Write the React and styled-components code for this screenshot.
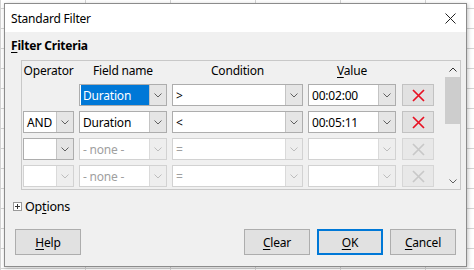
import React from 'react';
import styled, { createGlobalStyle } from 'styled-components';

const GlobalStyle = createGlobalStyle`
  html, body {
    margin: 0;
    padding: 0;
  }
  body {
    width: 474px;
    height: 270px;
    overflow: hidden;
    font-family: "Noto Sans", "Open Sans", sans-serif;
    font-size: 12px;
    color: #000;
    background-color: #fff;
    background-image:
      linear-gradient(to bottom, #d4d4d4 1px, transparent 1px),
      linear-gradient(to right, #d4d4d4 1px, transparent 1px);
    background-size: 100% 20px, 85px 100%;
    background-position: 0 8px, 0 0;
  }
`;

const Desktop = styled.div`
  padding: 3px 0 0 4px;
`;

const Dialog = styled.div`
  width: 463px;
  height: 264px;
  box-sizing: border-box;
  border: 1px solid #8c8c8c;
  background: #f0f0f0;
  box-shadow: 1px 1px 4px rgba(0, 0, 0, 0.25);
  display: flex;
  flex-direction: column;
`;

const TitleBar = styled.div`
  height: 28px;
  background: #fff;
  display: flex;
  align-items: center;
  justify-content: space-between;
  padding: 1px 10px 0 6px;
  box-sizing: border-box;
  flex-shrink: 0;
`;

const TitleText = styled.span`
  font-size: 12px;
  letter-spacing: -0.2px;
`;

const Body = styled.div`
  flex: 1;
  padding: 6px 0 0 6px;
  display: flex;
  flex-direction: column;
`;

const SectionLabel = styled.div`
  font-weight: bold;
  height: 16px;
  line-height: 16px;
  letter-spacing: -0.2px;
`;

const U = styled.span`
  text-decoration: underline;
  text-underline-offset: 2px;
`;

const Frame = styled.div`
  margin: 6px 0 0 10px;
  width: 440px;
  height: 130px;
  box-sizing: border-box;
  border: 1px solid #c8c8c8;
  display: flex;
`;

const Rows = styled.div`
  flex: 1;
  padding: 1px 0 0 1px;
  display: grid;
  grid-template-columns: 51px 88px 131px 88px 33px;
  grid-template-rows: 17px;
  grid-auto-rows: 22px;
  column-gap: 5px;
  row-gap: 5px;
  align-content: start;
  & > :nth-child(5n) {
    margin-left: 1px;
  }
`;

const Header = styled.div`
  line-height: 17px;
  text-align: center;
  letter-spacing: -0.2px;
`;

const Combo = styled.div`
  display: flex;
  box-sizing: border-box;
  border: 1px solid ${p => (p.$disabled ? '#d2d2d2' : '#adadad')};
  background: #fff;
`;

const ComboText = styled.div`
  flex: 1;
  display: flex;
  align-items: center;
  padding-left: 1px;
  min-width: 0;
  color: ${p => (p.$disabled ? '#a0a0a0' : '#000')};
  & > span {
    display: flex;
    align-items: center;
    height: 100%;
    padding-left: 2px;
    box-sizing: border-box;
    width: ${p => (p.$selected ? '100%' : 'auto')};
    background: ${p => (p.$selected ? '#0078d7' : 'transparent')};
    color: ${p => (p.$selected ? '#fff' : 'inherit')};
    letter-spacing: -0.2px;
  }
`;

const DropButton = styled.div`
  width: 16px;
  flex-shrink: 0;
  border-left: 1px solid ${p => (p.$disabled ? '#dadada' : '#c4c4c4')};
  background: ${p => (p.$disabled ? '#eeeeee' : '#e5e5e5')};
  display: flex;
  align-items: center;
  justify-content: center;
`;

const DeleteButton = styled.div`
  box-sizing: border-box;
  border: 1px solid ${p => (p.$disabled ? '#d6d6d6' : '#c2c2c2')};
  background: ${p => (p.$disabled ? '#e8e8e8' : '#e1e1e1')};
  display: flex;
  align-items: center;
  justify-content: center;
`;

const ScrollBar = styled.div`
  width: 15px;
  margin: 0 0 0 auto;
  background: #f0f0f0;
  display: flex;
  flex-direction: column;
  align-items: center;
`;

const ScrollArrow = styled.div`
  height: 16px;
  width: 15px;
  display: flex;
  align-items: center;
  justify-content: center;
`;

const ScrollThumb = styled.div`
  width: 15px;
  height: 47px;
  background: #cdcdcd;
`;

const ScrollTrack = styled.div`
  flex: 1;
`;

const OptionsRow = styled.div`
  margin: 9px 0 0 2px;
  height: 14px;
  display: flex;
  align-items: center;
  gap: 3px;
  font-size: 12.5px;
  letter-spacing: -0.2px;
`;

const Expander = styled.div`
  width: 9px;
  height: 9px;
  box-sizing: border-box;
  border: 1px solid #999;
  background: #fff;
  position: relative;
  &::before, &::after {
    content: '';
    position: absolute;
    background: #333;
  }
  &::before { left: 1px; right: 1px; top: 3px; height: 1px; }
  &::after { top: 1px; bottom: 1px; left: 3px; width: 1px; }
`;

const ButtonBar = styled.div`
  margin: 16px 10px 0 4px;
  display: flex;
  gap: 7px;
`;

const Button = styled.div`
  width: 66px;
  height: 26px;
  box-sizing: border-box;
  border: 1px solid ${p => (p.$default ? '#0078d7' : '#adadad')};
  box-shadow: ${p => (p.$default ? 'inset 0 0 0 1px #0078d7' : 'none')};
  background: #e1e1e1;
  display: flex;
  align-items: center;
  justify-content: center;
  letter-spacing: -0.2px;
  &:first-child {
    margin-right: auto;
  }
`;

const Chevron = ({ disabled, up }) => (
  <svg width="8" height="5" viewBox="0 0 8 5">
    <path
      d={up ? 'M0.5 4.5 L4 1 L7.5 4.5' : 'M0.5 0.5 L4 4 L7.5 0.5'}
      fill="none"
      stroke={disabled ? '#bdbdbd' : up ? '#333' : '#606060'}
      strokeWidth="1"
    />
  </svg>
);

const CloseIcon = () => (
  <svg width="11" height="11" viewBox="0 0 11 11">
    <path d="M0.5 0.5 L10.5 10.5 M10.5 0.5 L0.5 10.5" stroke="#222" strokeWidth="1" />
  </svg>
);

const RemoveIcon = ({ disabled }) => (
  <svg width="13" height="13" viewBox="0 0 13 13">
    <path
      d="M1 1 L12 12 M12 1 L1 12"
      stroke={disabled ? '#c8c8c8' : '#e81123'}
      strokeWidth="1.7"
    />
  </svg>
);

const ComboBox = ({ value, disabled, selected }) => (
  <Combo $disabled={disabled}>
    <ComboText $disabled={disabled} $selected={selected}>
      <span>{value}</span>
    </ComboText>
    <DropButton $disabled={disabled}>
      <Chevron disabled={disabled} />
    </DropButton>
  </Combo>
);

const rows = [
  { op: null, field: 'Duration', cond: '>', value: '00:02:00', selected: true },
  { op: 'AND', field: 'Duration', cond: '<', value: '00:05:11' },
  { op: '', opEnabled: true, field: '- none -', cond: '=', value: '', disabled: true },
  { op: '', field: '- none -', cond: '=', value: '', disabled: true },
];

const App = () => (
  <>
    <GlobalStyle />
    <Desktop>
      <Dialog>
        <TitleBar>
          <TitleText>Standard Filter</TitleText>
          <CloseIcon />
        </TitleBar>
        <Body>
          <SectionLabel><U>F</U>ilter Criteria</SectionLabel>
          <Frame>
            <Rows>
              <Header>Operator</Header>
              <Header>Field name</Header>
              <Header>Condition</Header>
              <Header><U>V</U>alue</Header>
              <div />
              {rows.map((r, i) => (
                <React.Fragment key={i}>
                  {r.op === null ? (
                    <div />
                  ) : (
                    <ComboBox value={r.op} disabled={r.disabled && !r.opEnabled} />
                  )}
                  <ComboBox value={r.field} disabled={r.disabled} selected={r.selected} />
                  <ComboBox value={r.cond} disabled={r.disabled} />
                  <ComboBox value={r.value} disabled={r.disabled} />
                  <DeleteButton $disabled={r.disabled}>
                    <RemoveIcon disabled={r.disabled} />
                  </DeleteButton>
                </React.Fragment>
              ))}
            </Rows>
            <ScrollBar>
              <ScrollArrow><Chevron up /></ScrollArrow>
              <ScrollThumb />
              <ScrollTrack />
              <ScrollArrow><Chevron /></ScrollArrow>
            </ScrollBar>
          </Frame>
          <OptionsRow>
            <Expander />
            <span>Op<U>t</U>ions</span>
          </OptionsRow>
          <ButtonBar>
            <Button><U>H</U>elp</Button>
            <Button><U>C</U>lear</Button>
            <Button $default><U>O</U>K</Button>
            <Button><U>C</U>ancel</Button>
          </ButtonBar>
        </Body>
      </Dialog>
    </Desktop>
  </>
);

export default App;
